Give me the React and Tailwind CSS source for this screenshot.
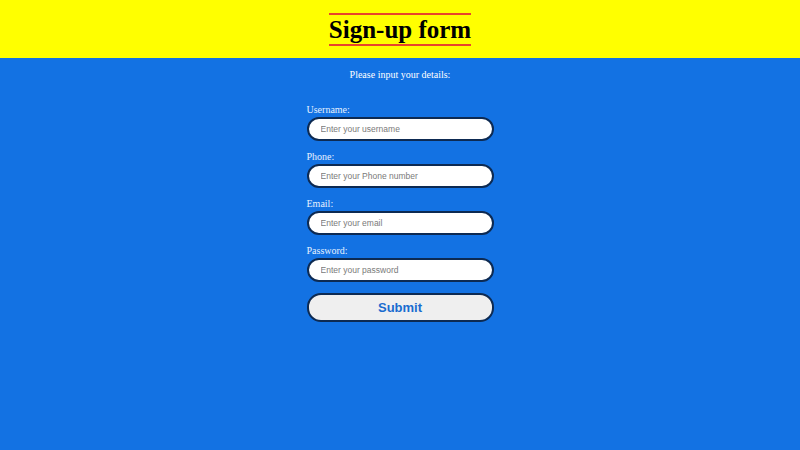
export default function App() {
  const fields = [
    { label: "Username:", type: "text", placeholder: "Enter your username" },
    { label: "Phone:", type: "tel", placeholder: "Enter your Phone number" },
    { label: "Email:", type: "email", placeholder: "Enter your email" },
    { label: "Password:", type: "password", placeholder: "Enter your password" },
  ];

  return (
    <div className="min-h-[450px] bg-[#1372e3] font-['Liberation_Serif',serif]">
      <header className="h-[58px] bg-[#ffff00] flex items-center justify-center">
        <h1 className="border-y-2 border-[#e8442c] text-[25px] leading-[29px] font-bold text-black">
          Sign-up form
        </h1>
      </header>

      <p className="mt-[10px] text-center text-[10px] leading-[14px] text-white">
        Please input your details:
      </p>

      <form className="mx-auto mt-[21px] w-[187px] flex flex-col">
        {fields.map((f) => (
          <label key={f.label} className="flex flex-col mb-[9px]">
            <span className="text-[10px] leading-[14px] text-[#e6f1ff]">{f.label}</span>
            <input
              type={f.type}
              placeholder={f.placeholder}
              className="h-[24px] w-full rounded-full border-2 border-[#0d2a52] bg-white pl-[12px] font-['Liberation_Sans',sans-serif] text-[8.5px] placeholder:text-[#7a7a7a] outline-none"
            />
          </label>
        ))}
        <button
          type="button"
          className="mt-[2px] h-[29px] w-full rounded-[14px] border-2 border-[#0d2a52] bg-[#efefef] font-['Liberation_Sans',sans-serif] text-[13px] font-bold text-[#1a6ccf]"
        >
          Submit
        </button>
      </form>
    </div>
  );
}
